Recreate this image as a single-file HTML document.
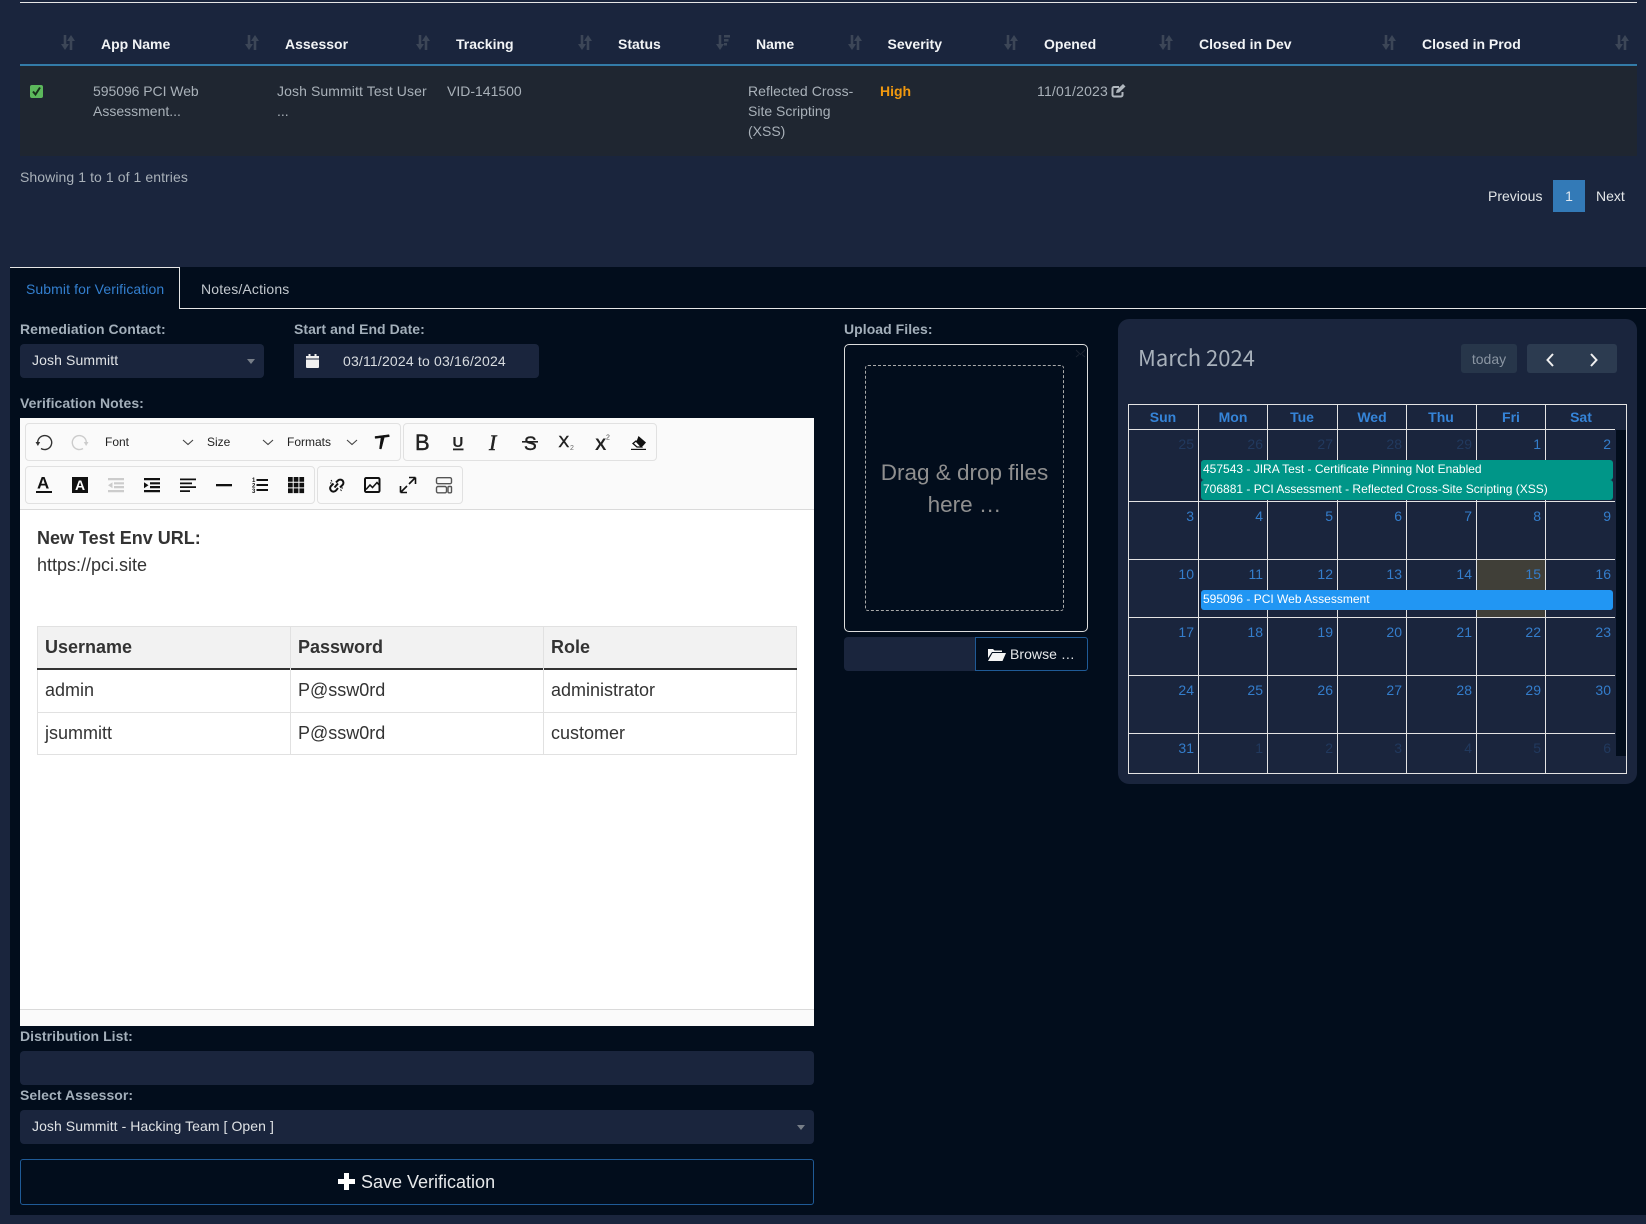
<!DOCTYPE html>
<html><head><meta charset="utf-8"><title>Verification</title>
<style>
html,body{margin:0;padding:0;background:#1a253d;}
body{width:1646px;height:1224px;position:relative;overflow:hidden;font-family:"Liberation Sans",sans-serif;font-size:14px;color:#c8ccd0;}
.a{position:absolute;}
.t{position:absolute;white-space:nowrap;line-height:20px;}
.th{font-weight:bold;color:#f2f4f6;top:34px;}
.td{color:#a9b1b9;}
.lb{font-weight:bold;color:#a3afba;letter-spacing:.05px;}
.inp{position:absolute;background:#1a253d;border-radius:4px;}
.g{position:absolute;background:#fafafa;border:1px solid #e1e1e1;border-radius:4px;box-sizing:border-box;}
.dn{font-weight:bold;color:#3584d8;text-align:center;top:407px;width:70px;}
.n{position:absolute;color:#347dcb;width:40px;text-align:right;line-height:20px;}
.o{color:#21395e;}
.v{position:absolute;width:1px;background:#e4e4e4;}
.h{position:absolute;height:1px;background:#e4e4e4;}
.ev{position:absolute;left:1201px;width:412px;height:20px;border-radius:3px;color:#fff;font-size:12px;line-height:19px;padding-left:2px;box-sizing:border-box;white-space:nowrap;}
.ed{position:absolute;color:#333;font-size:18px;line-height:24px;white-space:nowrap;}
</style></head><body>
<svg width="0" height="0" style="position:absolute"><defs>
<symbol id="sort" viewBox="0 0 14 15"><path fill="#3c4657" d="M2.700 0h2.600v9H8l-4 6-4-6h2.700zM10 0l4 6h-2.700v9H8.700V6H6z"/></symbol>
<symbol id="sort2" viewBox="0 0 14 15"><path fill="#3c4657" d="M2.700 0h2.600v9H8l-4 6-4-6h2.700zM8 0h6v2.500H8zM8 4h4.500v2.500H8zM8 8h3v2.500H8z"/></symbol>
</defs></svg>

<!-- top table -->
<div class="a" style="left:20px;top:2px;width:1617px;height:1px;background:#e6e6e6"></div>
<div class="t th" style="left:101px">App Name</div>
<div class="t th" style="left:285px">Assessor</div>
<div class="t th" style="left:456px">Tracking</div>
<div class="t th" style="left:618px">Status</div>
<div class="t th" style="left:756px">Name</div>
<div class="t th" style="left:887.500px">Severity</div>
<div class="t th" style="left:1044px">Opened</div>
<div class="t th" style="left:1199px">Closed in Dev</div>
<div class="t th" style="left:1422px">Closed in Prod</div>
<svg class="a" style="left:61px;top:35px" width="14" height="15"><use href="#sort"/></svg>
<svg class="a" style="left:245px;top:35px" width="14" height="15"><use href="#sort"/></svg>
<svg class="a" style="left:416px;top:35px" width="14" height="15"><use href="#sort"/></svg>
<svg class="a" style="left:578px;top:35px" width="14" height="15"><use href="#sort"/></svg>
<svg class="a" style="left:716px;top:35px" width="14" height="15"><use href="#sort2"/></svg>
<svg class="a" style="left:848px;top:35px" width="14" height="15"><use href="#sort"/></svg>
<svg class="a" style="left:1004px;top:35px" width="14" height="15"><use href="#sort"/></svg>
<svg class="a" style="left:1159px;top:35px" width="14" height="15"><use href="#sort"/></svg>
<svg class="a" style="left:1382px;top:35px" width="14" height="15"><use href="#sort"/></svg>
<svg class="a" style="left:1615px;top:35px" width="14" height="15"><use href="#sort"/></svg>
<div class="a" style="left:20px;top:64px;width:1617px;height:2px;background:#337ba8"></div>
<div class="a" style="left:20px;top:66px;width:1617px;height:90px;background:#1f2631"></div>
<svg class="a" style="left:30px;top:85px" width="13" height="13"><rect width="13" height="13" rx="2" fill="#5cb85c"/><path d="M3 6.500l2.500 3L10 2.500" stroke="#16301a" stroke-width="2" fill="none"/></svg>
<div class="t td" style="left:93px;top:81px;letter-spacing:-.05px">595096 PCI Web</div>
<div class="t td" style="left:93px;top:101px">Assessment...</div>
<div class="t td" style="left:277px;top:81px;letter-spacing:.1px">Josh Summitt Test User</div>
<div class="t td" style="left:277px;top:101px">...</div>
<div class="t td" style="left:447px;top:81px">VID-141500</div>
<div class="t td" style="left:748px;top:81px;letter-spacing:.07px">Reflected Cross-</div>
<div class="t td" style="left:748px;top:101px">Site Scripting</div>
<div class="t td" style="left:748px;top:121px">(XSS)</div>
<div class="t" style="left:880px;top:81px;color:#f0980f;font-weight:bold">High</div>
<div class="t td" style="left:1037px;top:81px;letter-spacing:.2px">11/01/2023</div>
<svg class="a" style="left:1111px;top:83px" width="16" height="15" viewBox="0 0 16 15"><path d="M8 4H3a1.500 1.500 0 0 0-1.500 1.500v6.500A1.500 1.500 0 0 0 3 13.500h7a1.500 1.500 0 0 0 1.500-1.500V9" stroke="#b0b7be" stroke-width="2" fill="none"/><path d="M5 10l.7-3L12 1l2.500 2.500L8.200 9.500z" fill="#b0b7be"/></svg>
<div class="t td" style="left:20px;top:167px;letter-spacing:.08px">Showing 1 to 1 of 1 entries</div>
<div class="t" style="left:1488px;top:186px;color:#e3e6e8">Previous</div>
<div class="a" style="left:1553px;top:180px;width:32px;height:32px;background:#337ab7;color:#dfe8f0;text-align:center;line-height:32px">1</div>
<div class="t" style="left:1596px;top:186px;color:#e3e6e8">Next</div>

<!-- dark panel -->
<div class="a" style="left:10px;top:267px;width:1636px;height:948px;background:#020d1c"></div>
<div class="a" style="left:10px;top:267px;width:170px;height:42px;border-top:1px solid #e6e6e6;border-right:1px solid #e6e6e6;box-sizing:border-box;background:#020d1c"></div>
<div class="a" style="left:180px;top:308px;width:1466px;height:1px;background:#e6e6e6"></div>
<div class="t" style="left:26px;top:279px;color:#337fcf;letter-spacing:.09px">Submit for Verification</div>
<div class="t" style="left:201px;top:279px;color:#c2c8ce;letter-spacing:.16px">Notes/Actions</div>

<!-- form top -->
<div class="t lb" style="left:20px;top:319px">Remediation Contact:</div>
<div class="inp" style="left:20px;top:344px;width:244px;height:34px"></div>
<div class="t" style="left:32px;top:350px;color:#dfe2e5;letter-spacing:.12px">Josh Summitt</div>
<div class="a" style="left:247px;top:359px;width:0;height:0;border-left:4px solid transparent;border-right:4px solid transparent;border-top:5px solid #777e88"></div>
<div class="t lb" style="left:294px;top:319px">Start and End Date:</div>
<div class="inp" style="left:294px;top:344px;width:245px;height:34px;border-radius:0 4px 4px 0"></div>
<svg class="a" style="left:306px;top:354px" width="13" height="14" viewBox="0 0 13 14"><path fill="#f0f0f0" d="M2.500 0h2v2h4V0h2v2H13v2.500H0V2h2.500zM0 5.500h13V13a1 1 0 0 1-1 1H1a1 1 0 0 1-1-1z"/></svg>
<div class="t" style="left:343px;top:351px;color:#d8dce0;letter-spacing:.18px">03/11/2024 to 03/16/2024</div>
<div class="t lb" style="left:20px;top:393px">Verification Notes:</div>

<!-- editor -->
<div class="a" style="left:20px;top:418px;width:794px;height:608px;background:#fff"></div>
<div class="a" style="left:20px;top:418px;width:794px;height:91px;background:#fafafa;border-bottom:1px solid #dadada"></div>
<div class="a" style="left:20px;top:1009px;width:794px;height:17px;background:#fafafa;border-top:1px solid #dadada;box-sizing:border-box"></div>
<div class="g" style="left:25px;top:423px;width:376px;height:38px"></div>
<div class="g" style="left:403px;top:423px;width:254px;height:38px"></div>
<div class="g" style="left:25px;top:466px;width:290px;height:38px"></div>
<div class="g" style="left:317px;top:466px;width:146px;height:38px"></div>
<svg class="a" style="left:25px;top:423px" width="640" height="82" viewBox="0 0 640 82" font-family="Liberation Sans, sans-serif">
<!-- undo / redo -->
<path d="M12.700 19.500A7 7 0 1 1 16 25.500" fill="none" stroke="#333" stroke-width="1.400"/><path d="M10.500 19h4.700l-2.300 4z" fill="#333"/>
<g transform="matrix(-1 0 0 1 74 0)"><path d="M12.700 19.500A7 7 0 1 1 16 25.500" fill="none" stroke="#ccc" stroke-width="1.400"/><path d="M10.500 19h4.700l-2.300 4z" fill="#ccc"/></g>
<g fill="none" stroke="#444" stroke-width="1.100"><path d="M158 17l5 4.500 5-4.500M238 17l5 4.500 5-4.500M322 17l5 4.500 5-4.500"/></g>
<text x="80" y="23" font-size="12" fill="#222">Font</text>
<text x="182" y="23" font-size="12" fill="#222">Size</text>
<text x="262" y="23" font-size="12" fill="#222">Formats</text>
<path d="M350 13.500l14-1.800.3 2-5 .6-3 11.700-1.800-.3 1.500-11-5.800.7z" fill="#111" stroke="#111" stroke-width=".5"/>
<text x="390" y="27" font-size="22" fill="#222" stroke="#222" stroke-width=".4">B</text>
<text x="427.500" y="24" font-size="15" font-weight="bold" fill="#222">U</text><path d="M428 25.500h10.500v1.800H428z" fill="#222"/>
<text x="464" y="27" font-size="22" font-style="italic" font-family="Liberation Serif,serif" fill="#222" stroke="#222" stroke-width=".5">I</text>
<text x="499" y="27" font-size="19" fill="#222" stroke="#222" stroke-width=".4">S</text><path d="M497 18h16v1.600h-16z" fill="#222"/>
<text x="533.500" y="24" font-size="16" fill="#222" stroke="#222" stroke-width=".5">X</text><text x="545" y="27" font-size="7" fill="#666">2</text>
<text x="570" y="27" font-size="17" font-weight="bold" fill="#222">X</text><text x="581" y="16.500" font-size="7" fill="#444">2</text>
<path d="M613.500 13l7.500 6.500-4 4.500-5.500-5.500z" fill="#111"/><path d="M611 18l5.500 6h-4.500l-4-3.500z" fill="#fff" stroke="#111" stroke-width="1.300"/><path d="M606 25.800h15v1.200h-15z" fill="#111"/>
<!-- row 2 -->
<text x="12" y="65.500" font-size="17" font-weight="bold" fill="#111">A</text><path d="M11 68h16v2H11z" fill="#111"/>
<path d="M47 54h16v16H47z" fill="#111"/><text x="50" y="67" font-size="14" font-weight="bold" fill="#fff">A</text>
<path d="M83 55h16v2.200H83zM89 59.200h10v2.200H89zM89 63h10v2.200H89zM83 67h16v2.200H83zM87.500 59.200v6L83 62.200z" fill="#ccc"/>
<path d="M119 55h16v2.200h-16zM125 59.200h10v2.200h-10zM125 63h10v2.200h-10zM119 67h16v2.200h-16zM119 59.200v6l4.500-3z" fill="#111"/>
<path d="M155 55.500h16v1.800h-16zM155 59.500h12v1.800h-12zM155 63.200h16v1.800h-16zM155 67.200h10v1.800h-10z" fill="#111"/>
<path d="M191 61h16v2.300h-16z" fill="#111"/>
<path d="M231.500 56h11.500v2h-11.500zM231.500 61h11.500v2h-11.500zM231.500 66h11.500v2h-11.500z" fill="#111"/><text x="227" y="59" font-size="6" font-weight="bold" fill="#111">1</text><text x="227" y="64.500" font-size="6" font-weight="bold" fill="#111">2</text><text x="227" y="70" font-size="6" font-weight="bold" fill="#111">3</text>
<path d="M263 54h4.700v4.700H263zM268.700 54h4.700v4.700h-4.700zM274.400 54h4.700v4.700h-4.700zM263 59.700h4.700v4.700H263zM268.700 59.700h4.700v4.700h-4.700zM274.400 59.700h4.700v4.700h-4.700zM263 65.400h4.700v4.700H263zM268.700 65.400h4.700v4.700h-4.700zM274.400 65.400h4.700v4.700h-4.700z" fill="#111"/>
<g fill="none" stroke="#111" stroke-width="2">
<path d="M311 59.500l2-2a3 3 0 0 1 4.500 4.500l-2.500 2.500M313 65l-2 2.500a3 3 0 0 1-5-4.500l2.500-2.500M309.500 64.500l3.500-4"/>
<path d="M306 57l1 1.500M305 60h1.500M316.500 68l-1-1.500M318 65h-1.500" stroke-width="1"/>
<rect x="340" y="55" width="14.500" height="14" rx="1.200"/><path d="M341 66.500l4-4.500 2.500 2.500 4.500-5 3 3.500" stroke-width="1.500"/>
<path d="M390.500 54.500h-6.500M390.500 54.500v6.500M390.500 54.500l-6.500 6.500M375.500 69.500h6.500M375.500 69.500v-6.500M375.500 69.500l6.500-6.500" stroke-width="1.600"/>
<g stroke="#555" stroke-width="1.400"><rect x="411.500" y="54.700" width="15" height="6" rx="1.500"/><rect x="411.500" y="63.500" width="10" height="6.300" rx="1.500"/><rect x="423" y="63.500" width="3.500" height="6.300" rx="1"/></g>
</g>
</svg>

<div class="ed" style="left:37px;top:526px;font-weight:bold;">New Test Env URL:</div>
<div class="ed" style="left:37px;top:553px">https://pci.site</div>
<div class="a" style="left:37px;top:626px;width:760px;height:129px;background:#fff;border:1px solid #e1e1e1;box-sizing:border-box"></div>
<div class="a" style="left:37px;top:626px;width:760px;height:42px;background:#f2f2f2;border:1px solid #e1e1e1;border-bottom:0;box-sizing:border-box"></div>
<div class="a" style="left:37px;top:668px;width:760px;height:2px;background:#333"></div>
<div class="a" style="left:37px;top:712px;width:760px;height:1px;background:#e1e1e1"></div>
<div class="a" style="left:290px;top:626px;width:1px;height:129px;background:#e1e1e1"></div>
<div class="a" style="left:543px;top:626px;width:1px;height:129px;background:#e1e1e1"></div>
<div class="ed" style="left:45px;top:635px;font-weight:bold">Username</div>
<div class="ed" style="left:298px;top:635px;font-weight:bold">Password</div>
<div class="ed" style="left:551px;top:635px;font-weight:bold">Role</div>
<div class="ed" style="left:45px;top:678px">admin</div>
<div class="ed" style="left:298px;top:678px">P@ssw0rd</div>
<div class="ed" style="left:551px;top:678px">administrator</div>
<div class="ed" style="left:45px;top:721px">jsummitt</div>
<div class="ed" style="left:298px;top:721px">P@ssw0rd</div>
<div class="ed" style="left:551px;top:721px">customer</div>

<!-- bottom form -->
<div class="t lb" style="left:20px;top:1026px">Distribution List:</div>
<div class="inp" style="left:20px;top:1051px;width:794px;height:34px"></div>
<div class="t lb" style="left:20px;top:1085px">Select Assessor:</div>
<div class="inp" style="left:20px;top:1110px;width:794px;height:34px"></div>
<div class="t" style="left:32px;top:1116px;color:#dfe2e5;letter-spacing:.07px">Josh Summitt - Hacking Team [ Open ]</div>
<div class="a" style="left:797px;top:1125px;width:0;height:0;border-left:4px solid transparent;border-right:4px solid transparent;border-top:5px solid #777e88"></div>
<div class="a" style="left:20px;top:1159px;width:794px;height:46px;border:1px solid #1f5a96;border-radius:3px;box-sizing:border-box"></div>
<svg class="a" style="left:338px;top:1173px" width="17" height="17"><path fill="#fff" d="M6 0h5v6h6v5h-6v6H6v-6H0V6h6z"/></svg>
<div class="t" style="left:361px;top:1172px;font-size:18px;color:#e6e8ea">Save Verification</div>

<!-- upload -->
<div class="t lb" style="left:844px;top:319px">Upload Files:</div>
<div class="a" style="left:844px;top:344px;width:244px;height:288px;border:1px solid #ddd;border-radius:5px;box-sizing:border-box"></div>
<div class="a" style="left:865px;top:365px;width:199px;height:246px;border:1px dashed #aaa;border-radius:3px;box-sizing:border-box"></div>
<svg class="a" style="left:1075px;top:349px" width="11" height="9"><path d="M1 1l4.500 4.500L10 1M4 5.500L1 8M7 5.500L10 8" stroke="#1a2230" fill="none"/></svg>
<div class="a" style="left:845px;top:457px;width:239px;text-align:center;color:#8f8f8f;font-size:22.500px;line-height:32px">Drag &amp; drop files<br>here …</div>
<div class="inp" style="left:844px;top:637px;width:244px;height:34px"></div>
<div class="a" style="left:975px;top:637px;width:113px;height:34px;background:#020d1c;border:1px solid #1f5a96;border-radius:0 3px 3px 0;box-sizing:border-box"></div>
<svg class="a" style="left:988px;top:648px" width="18" height="13" viewBox="0 0 18 13"><path fill="#f5f5f5" d="M0 1h5l1.500 1.500H14V4H4L0 10zM4.500 5H18l-3.500 8H0z"/></svg>
<div class="t" style="left:1010px;top:644px;color:#e6e8ea;letter-spacing:.05px">Browse …</div>

<!-- calendar -->
<div class="a" style="left:1118px;top:319px;width:519px;height:465px;background:#1a253d;border-radius:11px"></div>
<div class="t" style="left:1138px;top:341px;font-size:22px;line-height:32px;font-family:'Noto Sans CJK JP','Liberation Sans',sans-serif;color:#a8b1bb">March 2024</div>
<div class="a" style="left:1461px;top:344px;width:56px;height:29px;background:#27364a;border-radius:3px;color:#8a95a2;text-align:center;line-height:31px">today</div>
<div class="a" style="left:1527px;top:344px;width:90px;height:29px;background:#2c3b50;border-radius:3px"></div>
<svg class="a" style="left:1544px;top:352px" width="60" height="16"><path d="M9 2L3.500 8 9 14M47 2l5.500 6L47 14" stroke="#f0f0f0" stroke-width="2" fill="none"/></svg>

<div class="a" style="left:1616px;top:430px;width:10px;height:326px;background:#020d1c"></div>
<div class="a" style="left:1477px;top:560px;width:68px;height:57px;background:#403f38"></div>
<div class="a" style="left:1128px;top:404px;width:499px;height:370px;border:1px solid #e4e4e4;box-sizing:border-box"></div>
<div class="v" style="left:1198px;top:404px;height:369px"></div>
<div class="v" style="left:1267px;top:404px;height:369px"></div>
<div class="v" style="left:1337px;top:404px;height:369px"></div>
<div class="v" style="left:1406px;top:404px;height:369px"></div>
<div class="v" style="left:1476px;top:404px;height:369px"></div>
<div class="v" style="left:1545px;top:404px;height:369px"></div>
<div class="h" style="left:1128px;top:429px;width:487px"></div>
<div class="h" style="left:1128px;top:501px;width:487px"></div>
<div class="h" style="left:1128px;top:559px;width:487px"></div>
<div class="h" style="left:1128px;top:617px;width:487px"></div>
<div class="h" style="left:1128px;top:675px;width:487px"></div>
<div class="h" style="left:1128px;top:733px;width:487px"></div>

<div class="t dn" style="left:1128px">Sun</div>
<div class="t dn" style="left:1198px">Mon</div>
<div class="t dn" style="left:1267px">Tue</div>
<div class="t dn" style="left:1337px">Wed</div>
<div class="t dn" style="left:1406px">Thu</div>
<div class="t dn" style="left:1476px">Fri</div>
<div class="t dn" style="left:1546px">Sat</div>

<div class="n o" style="left:1154px;top:434px">25</div><div class="n o" style="left:1223px;top:434px">26</div><div class="n o" style="left:1293px;top:434px">27</div><div class="n o" style="left:1362px;top:434px">28</div><div class="n o" style="left:1432px;top:434px">29</div><div class="n" style="left:1501px;top:434px">1</div><div class="n" style="left:1571px;top:434px">2</div>
<div class="n" style="left:1154px;top:506px">3</div><div class="n" style="left:1223px;top:506px">4</div><div class="n" style="left:1293px;top:506px">5</div><div class="n" style="left:1362px;top:506px">6</div><div class="n" style="left:1432px;top:506px">7</div><div class="n" style="left:1501px;top:506px">8</div><div class="n" style="left:1571px;top:506px">9</div>
<div class="n" style="left:1154px;top:564px">10</div><div class="n" style="left:1223px;top:564px">11</div><div class="n" style="left:1293px;top:564px">12</div><div class="n" style="left:1362px;top:564px">13</div><div class="n" style="left:1432px;top:564px">14</div><div class="n" style="left:1501px;top:564px">15</div><div class="n" style="left:1571px;top:564px">16</div>
<div class="n" style="left:1154px;top:622px">17</div><div class="n" style="left:1223px;top:622px">18</div><div class="n" style="left:1293px;top:622px">19</div><div class="n" style="left:1362px;top:622px">20</div><div class="n" style="left:1432px;top:622px">21</div><div class="n" style="left:1501px;top:622px">22</div><div class="n" style="left:1571px;top:622px">23</div>
<div class="n" style="left:1154px;top:680px">24</div><div class="n" style="left:1223px;top:680px">25</div><div class="n" style="left:1293px;top:680px">26</div><div class="n" style="left:1362px;top:680px">27</div><div class="n" style="left:1432px;top:680px">28</div><div class="n" style="left:1501px;top:680px">29</div><div class="n" style="left:1571px;top:680px">30</div>
<div class="n" style="left:1154px;top:738px">31</div><div class="n o" style="left:1223px;top:738px">1</div><div class="n o" style="left:1293px;top:738px">2</div><div class="n o" style="left:1362px;top:738px">3</div><div class="n o" style="left:1432px;top:738px">4</div><div class="n o" style="left:1501px;top:738px">5</div><div class="n o" style="left:1571px;top:738px">6</div>

<div class="ev" style="top:460px;background:#009688">457543 - JIRA Test - Certificate Pinning Not Enabled</div>
<div class="ev" style="top:480px;background:#009688">706881 - PCI Assessment - Reflected Cross-Site Scripting (XSS)</div>
<div class="ev" style="top:590px;background:#2196f3">595096 - PCI Web Assessment</div>
</body></html>
